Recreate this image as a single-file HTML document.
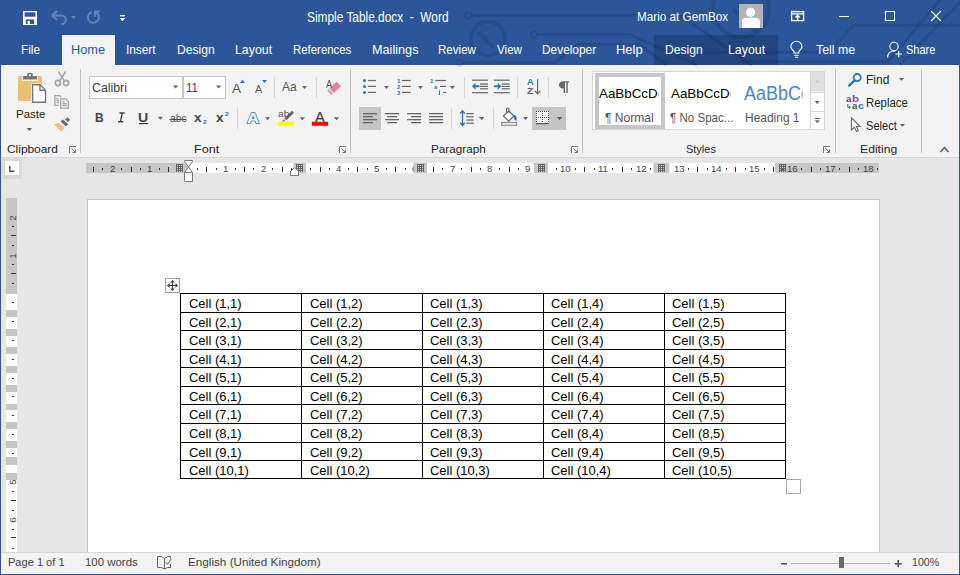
<!DOCTYPE html>
<html><head><meta charset="utf-8"><style>
html,body{margin:0;padding:0}
body{width:960px;height:575px;overflow:hidden;position:relative;background:#e6e6e6;font-family:"Liberation Sans", sans-serif}
body>div{position:absolute}
.t{position:absolute;white-space:nowrap;transform-origin:0 0}
svg{position:absolute;left:0;top:0}
</style></head><body>
<div style="left:0px;top:0px;width:960px;height:65px;background:#2b579a"></div>
<div style="left:0px;top:65px;width:960px;height:92px;background:#f3f3f3"></div>
<div style="left:0px;top:157px;width:960px;height:1px;background:#d6d6d6"></div>
<div style="left:0px;top:158px;width:960px;height:394px;background:#e6e6e6"></div>
<div style="left:0px;top:552px;width:960px;height:1px;background:#d6d6d6"></div>
<div style="left:0px;top:553px;width:960px;height:22px;background:#f3f3f3"></div>
<div style="left:0px;top:65px;width:1px;height:510px;background:#2b579a"></div>
<div style="left:959px;top:65px;width:1px;height:510px;background:#2b579a"></div>
<div style="left:0px;top:574px;width:960px;height:1px;background:#2b579a"></div>
<div style="left:62px;top:35px;width:53px;height:30px;background:#f3f3f3"></div>
<div style="left:654px;top:35px;width:124px;height:30px;background:rgba(10,25,60,0.27)"></div>
<div style="left:89px;top:76px;width:94px;height:23px;background:#fff;border:1px solid #c6c6c6;box-sizing:border-box"></div>
<div style="left:183px;top:76px;width:43px;height:23px;background:#fff;border:1px solid #c6c6c6;box-sizing:border-box"></div>
<div style="left:592px;top:71px;width:233px;height:59px;background:#fff;border:1px solid #d6d6d6;box-sizing:border-box"></div>
<div style="left:0;top:0;width:960px;height:575px;overflow:hidden;clip-path:polygon(597px 80px,658.5px 80px,658.5px 105px,597px 105px)"><div class="t" style="left:599.47px;top:86.93px;font-size:13.2px;line-height:13.2px;color:#000;transform:scaleX(1.0132);">AaBbCcDc</div></div>
<div style="left:0;top:0;width:960px;height:575px;overflow:hidden;clip-path:polygon(668px 80px,730.5px 80px,730.5px 105px,668px 105px)"><div class="t" style="left:670.97px;top:86.93px;font-size:13.2px;line-height:13.2px;color:#000;transform:scaleX(1.0132);">AaBbCcDc</div></div>
<div style="left:0;top:0;width:960px;height:575px;overflow:hidden;clip-path:polygon(740px 78px,802.5px 78px,802.5px 106px,740px 106px)"><div class="t" style="left:743.71px;top:83.99px;font-size:19.5px;line-height:19.5px;color:#4f84cc;transform:scaleX(0.9203);">AaBbCcc</div></div>
<div style="left:2px;top:157.5px;width:20px;height:21px;background:#dadada"></div>
<div style="left:5px;top:161px;width:14px;height:14px;background:#fff"></div>
<div style="left:87px;top:199px;width:793px;height:353px;background:#fff;border:1px solid #c6c6c6;border-bottom:none;box-sizing:border-box"></div>
<svg width="960" height="575" viewBox="0 0 960 575">
<g fill="none" stroke="rgba(12,30,70,0.17)" stroke-width="3" stroke-linejoin="round"><circle cx="468.4" cy="15.3" r="3.2" stroke-width="2.2"/><path d="M471.6 15.3 H680 L752 65"/><circle cx="534" cy="34.6" r="3.2" stroke-width="2.2"/><path d="M537.2 34.6 H630.4 L697 65"/><circle cx="459.5" cy="62.5" r="3" stroke-width="2.2"/><path d="M462.5 62.5 H555 L577 44.5 H640 L666 65"/><path d="M700 52.3 H828.75 L853.75 25.2 H960"/><path d="M740 61.7 H888 L940 0"/><path d="M962 0 L900 65"/><circle cx="488" cy="38.8" r="17" stroke-width="3.5"/><path d="M478 32 L493 47" stroke-width="4"/><path d="M476 30 H486 L476 40z" fill="{CC}" stroke="none"/><circle cx="741" cy="9" r="28" stroke-width="4"/><path d="M733 9 L756 32" stroke-width="4"/><path d="M728 4 H742 L728 18z" fill="{CC}" stroke="none"/></g>
<rect x="23" y="11" width="14" height="14" fill="#fff" />
<rect x="24.6" y="12.3" width="10.8" height="4.4" fill="#2b579a" />
<rect x="25.8" y="19.4" width="8.4" height="4.6" fill="#2b579a" />
<rect x="27.6" y="21" width="2.3" height="3.5" fill="#fff" />
<path d="M53 15.5 H61.5 A4.2 4.2 0 0 1 61.5 24" fill="none" stroke="#6485bb" stroke-width="2"/>
<path d="M52 15.5 L57 11 M52 15.5 L57 20" fill="none" stroke="#6485bb" stroke-width="2"/>
<path d="M71 16 h5 l-2.5 3z" fill="#6485bb"/>
<path d="M91.5 12.2 A5.5 5.5 0 1 0 96 12.5" fill="none" stroke="#6485bb" stroke-width="2"/>
<path d="M95 11.5 h5 M95 11 v6" fill="none" stroke="#6485bb" stroke-width="2"/>
<rect x="120" y="15" width="5" height="1.3" fill="#fff" />
<path d="M119.7 18 h5.6 l-2.8 3.3z" fill="#fff"/>
<rect x="739" y="4" width="24" height="24" fill="#b3b3b3" />
<circle cx="750.6" cy="12.3" r="4.6" fill="#fff"/>
<path d="M742 28 V22 Q742 18 746 17.8 H755.5 Q760 18 760 22 V28z" fill="#fff"/>
<g fill="none" stroke="#fff" stroke-width="1.3"><rect x="791.6" y="11.6" width="12" height="9"/><path d="M791.6 13.8 H803.6 M797.6 21 V15.5 M795.5 17.5 L797.6 15.3 L799.7 17.5"/></g>
<rect x="839" y="16" width="10" height="1" fill="#fff" />
<rect x="885.5" y="11.5" width="9" height="9" fill="none" stroke="#fff" stroke-width="1"/>
<path d="M931 11 L941 21 M941 11 L931 21" stroke="#fff" stroke-width="1.1"/>
<g fill="none" stroke="#fff" stroke-width="1.1"><path d="M794 53 V51.5 Q790.8 48.5 790.8 46.8 A5.6 5.6 0 1 1 802 46.8 Q802 48.5 798.8 51.5 V53z"/><path d="M794.3 55.3 H798.5 M795 57.3 H798"/></g>
<g fill="none" stroke="#fff" stroke-width="1.1"><circle cx="894" cy="46.5" r="4.2"/><path d="M887.5 57.5 Q888 51.5 893 51 H895.5"/><path d="M898.7 50.7 V57.3 M895.4 54 H902"/></g>
<rect x="80" y="69" width="1" height="84" fill="#c2c2c2" />
<rect x="350" y="69" width="1" height="84" fill="#c2c2c2" />
<rect x="582" y="69" width="1" height="84" fill="#c2c2c2" />
<rect x="835" y="69" width="1" height="84" fill="#c2c2c2" />
<rect x="921" y="69" width="1" height="84" fill="#c2c2c2" />
<rect x="274" y="77" width="1" height="21" fill="#d6d6d6" />
<rect x="316" y="77" width="1" height="21" fill="#d6d6d6" />
<rect x="237" y="108" width="1" height="21" fill="#d6d6d6" />
<rect x="464" y="77" width="1" height="21" fill="#d6d6d6" />
<rect x="517" y="77" width="1" height="21" fill="#d6d6d6" />
<rect x="548" y="77" width="1" height="21" fill="#d6d6d6" />
<rect x="451" y="108" width="1" height="21" fill="#d6d6d6" />
<rect x="493" y="108" width="1" height="21" fill="#d6d6d6" />
<g fill="none" stroke="#777" stroke-width="1"><path d="M69.5 153 V146.5 H76"/><path d="M71.5 148.5 L75.5 152.5 M75.5 149.5 V152.5 H72.5"/></g>
<g fill="none" stroke="#777" stroke-width="1"><path d="M339.5 153 V146.5 H346"/><path d="M341.5 148.5 L345.5 152.5 M345.5 149.5 V152.5 H342.5"/></g>
<g fill="none" stroke="#777" stroke-width="1"><path d="M571.5 153 V146.5 H578"/><path d="M573.5 148.5 L577.5 152.5 M577.5 149.5 V152.5 H574.5"/></g>
<g fill="none" stroke="#777" stroke-width="1"><path d="M823.5 153 V146.5 H830"/><path d="M825.5 148.5 L829.5 152.5 M829.5 149.5 V152.5 H826.5"/></g>
<rect x="18" y="76" width="24" height="25" rx="1.5" fill="#ebc173"/>
<rect x="22" y="75" width="16" height="6" fill="#f3f3f3" />
<path d="M23 76 H27.2 V74 Q27.2 73 28.2 73 H31.8 Q32.8 73 32.8 74 V76 H37 V79.5 H23z" fill="#767676"/>
<circle cx="30" cy="75.3" r="1" fill="#fff"/>
<path d="M31 83.5 H40.6 L46.8 89.7 V103.3 H31z" fill="#f3f3f3"/>
<path d="M32.6 84.8 H40 L45.5 90.3 V102.2 H32.6z" fill="#fff" stroke="#767676" stroke-width="1.4"/>
<path d="M40 84.8 V90.3 H45.5" fill="none" stroke="#767676" stroke-width="1.4"/>
<path d="M26.5 128 h5.6 l-2.8 3z" fill="#666"/>
<g fill="none" stroke="#a6a6a6" stroke-width="1.6"><path d="M58.3 71.5 L64.2 80.5 M65.7 71.5 L59.8 80.5"/><circle cx="57.9" cy="83" r="2.6"/><circle cx="66.1" cy="83" r="2.6"/></g>
<g fill="none" stroke="#a6a6a6" stroke-width="1.3"><path d="M59 105.3 H54.9 V95.7 H59.8 L61.2 97.1"/><path d="M60.7 108.2 V98.8 H65.6 L68.4 101.6 V108.2z"/><path d="M56.5 98.5 h2 M56.5 100.5 h2.5 M56.5 102.5 h2.5 M62.5 101.5 h2 M62.5 103.5 h4.3 M62.5 105.5 h4.3"/></g>
<path d="M54 124.3 L58.6 122.9 L64.8 127.9 L61 131.6z" fill="#ebc173"/>
<path d="M60.6 121.5 L62.8 119.6 L68.3 124.3 L66 126.4z" fill="#6d6d6d"/>
<path d="M65 119.5 L67.5 117.3 L70.2 119.8 L67.7 122z" fill="#6d6d6d"/>
<path d="M172.8 85.6 h5.6 l-2.8 3z M216 85.6 h5.4 l-2.7 3z" fill="#666"/>
<path d="M239.9 83 L242.45 79.8 L245 83z M262 80 h5 l-2.5 3z" fill="#2e75b6"/>
<path d="M302 86 h5 l-2.5 3z" fill="#666"/>
<g transform="rotate(-42 334 88.3)"><rect x="327.5" y="85.2" width="13" height="6.4" rx="1" fill="#e58296"/><rect x="329.3" y="84" width="1.3" height="9" fill="#f3f3f3"/></g>
<path d="M119.5 113 H124.7 M118 121.8 H123.2 M122.3 113 L120.3 121.8" stroke="#444" stroke-width="1.4" fill="none"/>
<rect x="139" y="123" width="9" height="1.2" fill="#444" />
<path d="M157.8 116.8 h5.2 l-2.6 3z" fill="#666"/>
<rect x="169.5" y="119" width="17" height="1" fill="#444" />
<path d="M265 117.2 h5 l-2.5 3z M299.9 117.2 h5.1 l-2.55 3z M333.7 117.2 h5.5 l-2.75 3z" fill="#666"/>
<path d="M285 119.3 L292.8 111.8" stroke="#f3f3f3" stroke-width="5"/><path d="M285.3 119.3 L293 111.8" stroke="#666" stroke-width="3"/><path d="M282.5 121.8 L284.8 119.8" stroke="#777" stroke-width="1.5"/>
<rect x="277.9" y="121.8" width="16.2" height="4" fill="#ffff00" />
<rect x="311.9" y="121.8" width="16.3" height="4" fill="#ff0000" />
<circle cx="364.5" cy="80.5" r="1.5" fill="#2e75b6"/>
<rect x="368" y="79.9" width="8" height="1.2" fill="#666" />
<rect x="402" y="79.9" width="8.7" height="1.2" fill="#666" />
<circle cx="364.5" cy="86.4" r="1.5" fill="#2e75b6"/>
<rect x="368" y="85.80000000000001" width="8" height="1.2" fill="#666" />
<rect x="402" y="85.80000000000001" width="8.7" height="1.2" fill="#666" />
<circle cx="364.5" cy="92.4" r="1.5" fill="#2e75b6"/>
<rect x="368" y="91.80000000000001" width="8" height="1.2" fill="#666" />
<rect x="402" y="91.80000000000001" width="8.7" height="1.2" fill="#666" />
<path d="M384 85.9 h5 l-2.5 3z M418 85.9 h5 l-2.5 3z M449.7 85.9 h5.3 l-2.65 3z" fill="#666"/>
<rect x="438.9" y="91" width="1.1" height="4" fill="#2e75b6" />
<rect x="438.9" y="89.6" width="1.1" height="0.8" fill="#2e75b6" />
<rect x="435.3" y="79.9" width="10.7" height="1.2" fill="#666" />
<rect x="440" y="85.8" width="6" height="1.2" fill="#666" />
<rect x="443.2" y="91.8" width="2.8" height="1.2" fill="#666" />
<rect x="472" y="79.6" width="16" height="1.2" fill="#666" />
<rect x="472" y="92.1" width="16" height="1.2" fill="#666" />
<rect x="480" y="83.4" width="8" height="1.2" fill="#666" />
<rect x="480" y="85.8" width="8" height="1.2" fill="#666" />
<rect x="480" y="88.2" width="8" height="1.2" fill="#666" />
<rect x="493.75" y="79.6" width="16" height="1.2" fill="#666" />
<rect x="493.75" y="92.1" width="16" height="1.2" fill="#666" />
<rect x="501.75" y="83.4" width="8" height="1.2" fill="#666" />
<rect x="501.75" y="85.8" width="8" height="1.2" fill="#666" />
<rect x="501.75" y="88.2" width="8" height="1.2" fill="#666" />
<path d="M472 86.3 L475.5 82.8 V85.3 H479.4 V87.3 H475.5 V89.8z" fill="#2e75b6"/>
<path d="M501.3 86.3 L497.8 82.8 V85.3 H493.9 V87.3 H497.8 V89.8z" fill="#2e75b6"/>
<path d="M537.6 79.3 V93.5 M535 90.8 L537.6 93.8 L540.2 90.8" stroke="#666" stroke-width="1.2" fill="none"/>
<path d="M563.6 81.2 H569 V82.6 H567.8 V93 H566.4 V82.6 H565 V93 H563.6 V88.4 Q559 88.4 559 84.8 Q559 81.2 563.6 81.2z" fill="#666"/>
<rect x="359" y="107" width="22" height="23" fill="#c5c5c5" />
<rect x="363" y="113" width="14" height="1.3" fill="#666" />
<rect x="363" y="116" width="10" height="1.3" fill="#666" />
<rect x="363" y="119" width="14" height="1.3" fill="#666" />
<rect x="363" y="122" width="10" height="1.3" fill="#666" />
<rect x="385" y="113" width="14" height="1.3" fill="#666" />
<rect x="387.2" y="116" width="9.8" height="1.3" fill="#666" />
<rect x="385" y="119" width="14" height="1.3" fill="#666" />
<rect x="387.2" y="122" width="9.8" height="1.3" fill="#666" />
<rect x="407.1" y="113" width="14" height="1.3" fill="#666" />
<rect x="411.1" y="116" width="10" height="1.3" fill="#666" />
<rect x="407.1" y="119" width="14" height="1.3" fill="#666" />
<rect x="411.1" y="122" width="10" height="1.3" fill="#666" />
<rect x="429.1" y="113" width="14" height="1.3" fill="#666" />
<rect x="429.1" y="116" width="14" height="1.3" fill="#666" />
<rect x="429.1" y="119" width="14" height="1.3" fill="#666" />
<rect x="429.1" y="122" width="14" height="1.3" fill="#666" />
<path d="M462.5 111 V125 M460.2 113.5 L462.5 110.8 L464.8 113.5 M460.2 122.7 L462.5 125.4 L464.8 122.7" stroke="#2e75b6" stroke-width="1.4" fill="none"/>
<rect x="466.25" y="113" width="7.5" height="1.2" fill="#666" />
<rect x="466.25" y="116.2" width="7.5" height="1.2" fill="#666" />
<rect x="466.25" y="119.4" width="7.5" height="1.2" fill="#666" />
<rect x="466.25" y="122.6" width="7.5" height="1.2" fill="#666" />
<path d="M478.75 117.1 h5.6 l-2.8 3z M523 117.1 h5.1 l-2.55 3z" fill="#666"/>
<path d="M503.5 116 L508.7 110.8 L513.9 116 L508.7 121.2z" fill="#fff" stroke="#666" stroke-width="1.2"/>
<path d="M506.5 113 V109.3 Q506.5 108 507.8 108 Q509 108 509 109.3 V113" fill="none" stroke="#666" stroke-width="1.1"/>
<path d="M513.5 114.5 Q517.5 116 516.5 120.5 Q515 121 514.3 119.5z" fill="#2e75b6"/>
<rect x="501.8" y="122.6" width="14.6" height="2.6" fill="#fff" stroke="#777" stroke-width="1"/>
<rect x="532" y="107" width="34" height="23" fill="#c5c5c5" />
<rect x="536" y="111" width="13" height="12" fill="#fff"/><path d="M536.5 111 V123 M542.5 111 V123 M548.5 111 V123 M536 111.5 H549 M536 117.5 H549" stroke="#444" stroke-width="1" stroke-dasharray="1 1"/>
<rect x="536" y="123" width="13" height="1.2" fill="#555" />
<path d="M556.9 117.1 h5.35 l-2.7 3z" fill="#555"/>
<rect x="597" y="75" width="66" height="52" fill="none" stroke="#c6c6c6" stroke-width="4"/>
<rect x="810" y="71" width="1" height="59" fill="#d6d6d6" />
<rect x="811" y="72" width="13" height="19.5" fill="#e0e0e0" />
<rect x="811" y="92" width="13" height="1" fill="#d6d6d6" />
<rect x="811" y="111" width="13" height="1" fill="#d6d6d6" />
<path d="M814.8 82.5 h5 l-2.5 -2.8z" fill="#c8c8c8"/>
<path d="M814.8 101 h5 l-2.5 3z" fill="#666"/>
<rect x="814.6" y="118" width="5.8" height="1" fill="#666" />
<path d="M814.8 120.3 h5 l-2.5 3z" fill="#666"/>
<circle cx="857.2" cy="77.6" r="3.6" fill="none" stroke="#2e75b6" stroke-width="1.8"/>
<path d="M854.6 80.3 L849.2 85.6" stroke="#2e75b6" stroke-width="2.4" stroke-linecap="round"/>
<path d="M898.7 78 h5.5 l-2.75 2.8z M900 124 h5 l-2.5 2.8z" fill="#666"/>
<path d="M847.8 104 V107.3 H850.5 M849 106 L850.6 107.3 L849 108.6" fill="none" stroke="#2e75b6" stroke-width="1"/>
<path d="M851.5 117.8 V129.8 L854.3 127.3 L856.6 131.5 L858.3 130.6 L856.3 126.6 L860 126.3z" fill="#fff" stroke="#666" stroke-width="1.1"/>
<path d="M940.5 152 L944.5 147.5 L948.5 152" fill="none" stroke="#666" stroke-width="1.8"/>
<rect x="9" y="166" width="1.5" height="6" fill="#555" />
<rect x="9" y="170.5" width="5.5" height="1.5" fill="#555" />
<rect x="86" y="163" width="793" height="10" fill="#c6c6c6" />
<rect x="188" y="163" width="105.75" height="10" fill="#fff" />
<rect x="306" y="163" width="107.69999999999999" height="10" fill="#fff" />
<rect x="427" y="163" width="107.20000000000005" height="10" fill="#fff" />
<rect x="548" y="163" width="105.70000000000005" height="10" fill="#fff" />
<rect x="669.2" y="163" width="105.79999999999995" height="10" fill="#fff" />
<rect x="93" y="167" width="1" height="5" fill="#333" />
<rect x="102" y="168" width="1" height="2" fill="#333" />
<rect x="121" y="168" width="1" height="2" fill="#333" />
<rect x="131" y="167" width="1" height="5" fill="#333" />
<rect x="140" y="168" width="1" height="2" fill="#333" />
<rect x="159" y="168" width="1" height="2" fill="#333" />
<rect x="168" y="167" width="1" height="5" fill="#333" />
<rect x="178" y="168" width="1" height="2" fill="#333" />
<rect x="197" y="168" width="1" height="2" fill="#333" />
<rect x="206" y="167" width="1" height="5" fill="#333" />
<rect x="216" y="168" width="1" height="2" fill="#333" />
<rect x="235" y="168" width="1" height="2" fill="#333" />
<rect x="244" y="167" width="1" height="5" fill="#333" />
<rect x="253" y="168" width="1" height="2" fill="#333" />
<rect x="272" y="168" width="1" height="2" fill="#333" />
<rect x="282" y="167" width="1" height="5" fill="#333" />
<rect x="291" y="168" width="1" height="2" fill="#333" />
<rect x="310" y="168" width="1" height="2" fill="#333" />
<rect x="320" y="167" width="1" height="5" fill="#333" />
<rect x="329" y="168" width="1" height="2" fill="#333" />
<rect x="348" y="168" width="1" height="2" fill="#333" />
<rect x="357" y="167" width="1" height="5" fill="#333" />
<rect x="367" y="168" width="1" height="2" fill="#333" />
<rect x="386" y="168" width="1" height="2" fill="#333" />
<rect x="395" y="167" width="1" height="5" fill="#333" />
<rect x="405" y="168" width="1" height="2" fill="#333" />
<rect x="433" y="167" width="1" height="5" fill="#333" />
<rect x="442" y="168" width="1" height="2" fill="#333" />
<rect x="461" y="168" width="1" height="2" fill="#333" />
<rect x="471" y="167" width="1" height="5" fill="#333" />
<rect x="480" y="168" width="1" height="2" fill="#333" />
<rect x="499" y="168" width="1" height="2" fill="#333" />
<rect x="509" y="167" width="1" height="5" fill="#333" />
<rect x="518" y="168" width="1" height="2" fill="#333" />
<rect x="556" y="168" width="1" height="2" fill="#333" />
<rect x="575" y="168" width="1" height="2" fill="#333" />
<rect x="584" y="167" width="1" height="5" fill="#333" />
<rect x="594" y="168" width="1" height="2" fill="#333" />
<rect x="612" y="168" width="1" height="2" fill="#333" />
<rect x="622" y="167" width="1" height="5" fill="#333" />
<rect x="631" y="168" width="1" height="2" fill="#333" />
<rect x="650" y="168" width="1" height="2" fill="#333" />
<rect x="688" y="168" width="1" height="2" fill="#333" />
<rect x="697" y="167" width="1" height="5" fill="#333" />
<rect x="707" y="168" width="1" height="2" fill="#333" />
<rect x="726" y="168" width="1" height="2" fill="#333" />
<rect x="735" y="167" width="1" height="5" fill="#333" />
<rect x="745" y="168" width="1" height="2" fill="#333" />
<rect x="764" y="168" width="1" height="2" fill="#333" />
<rect x="773" y="167" width="1" height="5" fill="#333" />
<rect x="782" y="168" width="1" height="2" fill="#333" />
<rect x="801" y="168" width="1" height="2" fill="#333" />
<rect x="811" y="167" width="1" height="5" fill="#333" />
<rect x="820" y="168" width="1" height="2" fill="#333" />
<rect x="839" y="168" width="1" height="2" fill="#333" />
<rect x="849" y="167" width="1" height="5" fill="#333" />
<rect x="858" y="168" width="1" height="2" fill="#333" />
<rect x="877" y="168" width="1" height="2" fill="#333" />
<rect x="6" y="198" width="11" height="354" fill="#fff" />
<rect x="6" y="198" width="11" height="96" fill="#c6c6c6" />
<rect x="6" y="310" width="11" height="7" fill="#c6c6c6" />
<rect x="6" y="329" width="11" height="7" fill="#c6c6c6" />
<rect x="6" y="347" width="11" height="7" fill="#c6c6c6" />
<rect x="6" y="366" width="11" height="7" fill="#c6c6c6" />
<rect x="6" y="385" width="11" height="7" fill="#c6c6c6" />
<rect x="6" y="404" width="11" height="6" fill="#c6c6c6" />
<rect x="6" y="422" width="11" height="7" fill="#c6c6c6" />
<rect x="6" y="441" width="11" height="7" fill="#c6c6c6" />
<rect x="6" y="457" width="11" height="8" fill="#c6c6c6" />
<rect x="6" y="473" width="11" height="7" fill="#c6c6c6" />
<rect x="12" y="226" width="2" height="1" fill="#333" />
<rect x="11" y="235" width="5" height="1" fill="#333" />
<rect x="12" y="245" width="2" height="1" fill="#333" />
<rect x="12" y="264" width="2" height="1" fill="#333" />
<rect x="11" y="273" width="5" height="1" fill="#333" />
<rect x="12" y="283" width="2" height="1" fill="#333" />
<rect x="12" y="302" width="2" height="1" fill="#333" />
<rect x="12" y="321" width="2" height="1" fill="#333" />
<rect x="12" y="340" width="2" height="1" fill="#333" />
<rect x="12" y="359" width="2" height="1" fill="#333" />
<rect x="12" y="378" width="2" height="1" fill="#333" />
<rect x="12" y="396" width="2" height="1" fill="#333" />
<rect x="12" y="415" width="2" height="1" fill="#333" />
<rect x="12" y="434" width="2" height="1" fill="#333" />
<rect x="12" y="453" width="2" height="1" fill="#333" />
<rect x="12" y="491" width="2" height="1" fill="#333" />
<rect x="11" y="500" width="5" height="1" fill="#333" />
<rect x="12" y="510" width="2" height="1" fill="#333" />
<rect x="12" y="529" width="2" height="1" fill="#333" />
<rect x="11" y="537" width="5" height="1" fill="#333" />
<rect x="12" y="548" width="2" height="1" fill="#333" />
<rect x="781" y="563" width="6" height="1.6" fill="#555" />
<rect x="791" y="563" width="99" height="1" fill="#b5b5b5" />
<rect x="839" y="557" width="5" height="11" fill="#6a6a6a" />
<rect x="894.7" y="563" width="7" height="1.6" fill="#555" />
<rect x="897.4" y="560" width="1.6" height="7.2" fill="#555" />
<g fill="none" stroke="#666" stroke-width="1"><path d="M157.5 556.5 H161.5 L164.5 558.5 V569 L161.5 567.5 H157.5z"/><path d="M164.5 558.5 L167.5 556.5 H170.5 V558.5 M170.5 564 V567.5 H167.5 L164.5 569"/><path d="M165.8 562.3 L167.6 564.3 L171.3 558.8"/></g>
</svg>
<div class="t" style="left:109.56px;top:164.20px;font-size:9.8px;line-height:9.8px;color:#444;transform:scaleX(0.9796);">2</div>
<div class="t" style="left:147.21px;top:164.20px;font-size:9.8px;line-height:9.8px;color:#444;transform:scaleX(0.9796);">1</div>
<div class="t" style="left:222.79px;top:164.20px;font-size:9.8px;line-height:9.8px;color:#444;transform:scaleX(0.9796);">1</div>
<div class="t" style="left:260.72px;top:164.20px;font-size:9.8px;line-height:9.8px;color:#444;transform:scaleX(0.9796);">2</div>
<div class="t" style="left:298.53px;top:164.20px;font-size:9.8px;line-height:9.8px;color:#444;transform:scaleX(0.9796);">3</div>
<div class="t" style="left:336.32px;top:164.20px;font-size:9.8px;line-height:9.8px;color:#444;transform:scaleX(0.9796);">4</div>
<div class="t" style="left:374.09px;top:164.20px;font-size:9.8px;line-height:9.8px;color:#444;transform:scaleX(0.9796);">5</div>
<div class="t" style="left:411.84px;top:164.20px;font-size:9.8px;line-height:9.8px;color:#444;transform:scaleX(0.9796);">6</div>
<div class="t" style="left:449.67px;top:164.20px;font-size:9.8px;line-height:9.8px;color:#444;transform:scaleX(0.9796);">7</div>
<div class="t" style="left:487.46px;top:164.20px;font-size:9.8px;line-height:9.8px;color:#444;transform:scaleX(0.9796);">8</div>
<div class="t" style="left:525.23px;top:164.20px;font-size:9.8px;line-height:9.8px;color:#444;transform:scaleX(0.9796);">9</div>
<div class="t" style="left:560.19px;top:164.20px;font-size:9.8px;line-height:9.8px;color:#444;transform:scaleX(0.9796);">10</div>
<div class="t" style="left:598.38px;top:164.20px;font-size:9.8px;line-height:9.8px;color:#444;transform:scaleX(0.9796);">11</div>
<div class="t" style="left:635.83px;top:164.20px;font-size:9.8px;line-height:9.8px;color:#444;transform:scaleX(0.9796);">12</div>
<div class="t" style="left:673.59px;top:164.20px;font-size:9.8px;line-height:9.8px;color:#444;transform:scaleX(0.9796);">13</div>
<div class="t" style="left:711.30px;top:164.20px;font-size:9.8px;line-height:9.8px;color:#444;transform:scaleX(0.9796);">14</div>
<div class="t" style="left:749.15px;top:164.20px;font-size:9.8px;line-height:9.8px;color:#444;transform:scaleX(0.9796);">15</div>
<div class="t" style="left:786.96px;top:164.20px;font-size:9.8px;line-height:9.8px;color:#444;transform:scaleX(0.9796);">16</div>
<div class="t" style="left:824.78px;top:164.20px;font-size:9.8px;line-height:9.8px;color:#444;transform:scaleX(0.9796);">17</div>
<div class="t" style="left:862.54px;top:164.20px;font-size:9.8px;line-height:9.8px;color:#444;transform:scaleX(0.9796);">18</div>
<div class="t" style="left:3.3000000000000007px;top:212.72000000000003px;width:20px;height:10px;line-height:10px;text-align:center;font-size:9.6px;color:#444;transform:rotate(-90deg);transform-origin:50% 50%">2</div>
<div class="t" style="left:3.3000000000000007px;top:250.51000000000002px;width:20px;height:10px;line-height:10px;text-align:center;font-size:9.6px;color:#444;transform:rotate(-90deg);transform-origin:50% 50%">1</div>
<div class="t" style="left:3.3000000000000007px;top:477.25px;width:20px;height:10px;line-height:10px;text-align:center;font-size:9.6px;color:#444;transform:rotate(-90deg);transform-origin:50% 50%">5</div>
<div class="t" style="left:3.3000000000000007px;top:515.04px;width:20px;height:10px;line-height:10px;text-align:center;font-size:9.6px;color:#444;transform:rotate(-90deg);transform-origin:50% 50%">6</div>
<svg width="960" height="575" viewBox="0 0 960 575" style="position:absolute;left:0;top:0"><rect x="293.75" y="163" width="12.25" height="10" fill="#c6c6c6"/><rect x="296" y="164" width="1" height="8" fill="#666"/><rect x="296" y="164" width="7" height="1" fill="#666"/><rect x="298" y="164" width="1" height="8" fill="#666"/><rect x="296" y="166" width="7" height="1" fill="#666"/><rect x="300" y="164" width="1" height="8" fill="#666"/><rect x="296" y="168" width="7" height="1" fill="#666"/><rect x="302" y="164" width="1" height="8" fill="#666"/><rect x="296" y="170" width="7" height="1" fill="#666"/><rect x="413.7" y="163" width="13.300000000000011" height="10" fill="#c6c6c6"/><rect x="417" y="164" width="1" height="8" fill="#666"/><rect x="417" y="164" width="7" height="1" fill="#666"/><rect x="419" y="164" width="1" height="8" fill="#666"/><rect x="417" y="166" width="7" height="1" fill="#666"/><rect x="421" y="164" width="1" height="8" fill="#666"/><rect x="417" y="168" width="7" height="1" fill="#666"/><rect x="423" y="164" width="1" height="8" fill="#666"/><rect x="417" y="170" width="7" height="1" fill="#666"/><rect x="534.2" y="163" width="13.799999999999955" height="10" fill="#c6c6c6"/><rect x="538" y="164" width="1" height="8" fill="#666"/><rect x="538" y="164" width="7" height="1" fill="#666"/><rect x="540" y="164" width="1" height="8" fill="#666"/><rect x="538" y="166" width="7" height="1" fill="#666"/><rect x="542" y="164" width="1" height="8" fill="#666"/><rect x="538" y="168" width="7" height="1" fill="#666"/><rect x="544" y="164" width="1" height="8" fill="#666"/><rect x="538" y="170" width="7" height="1" fill="#666"/><rect x="653.7" y="163" width="15.5" height="10" fill="#c6c6c6"/><rect x="658" y="164" width="1" height="8" fill="#666"/><rect x="658" y="164" width="7" height="1" fill="#666"/><rect x="660" y="164" width="1" height="8" fill="#666"/><rect x="658" y="166" width="7" height="1" fill="#666"/><rect x="662" y="164" width="1" height="8" fill="#666"/><rect x="658" y="168" width="7" height="1" fill="#666"/><rect x="664" y="164" width="1" height="8" fill="#666"/><rect x="658" y="170" width="7" height="1" fill="#666"/><rect x="775" y="163" width="4.5" height="10" fill="#c6c6c6"/><rect x="176" y="164" width="1" height="8" fill="#666"/><rect x="176" y="164" width="7" height="1" fill="#666"/><rect x="178" y="164" width="1" height="8" fill="#666"/><rect x="176" y="166" width="7" height="1" fill="#666"/><rect x="180" y="164" width="1" height="8" fill="#666"/><rect x="176" y="168" width="7" height="1" fill="#666"/><rect x="182" y="164" width="1" height="8" fill="#666"/><rect x="176" y="170" width="7" height="1" fill="#666"/><rect x="6" y="473" width="11" height="7" fill="#c6c6c6"/><rect x="779" y="164" width="1" height="8" fill="#666"/><rect x="779" y="164" width="7" height="1" fill="#666"/><rect x="781" y="164" width="1" height="8" fill="#666"/><rect x="779" y="166" width="7" height="1" fill="#666"/><rect x="783" y="164" width="1" height="8" fill="#666"/><rect x="779" y="168" width="7" height="1" fill="#666"/><rect x="785" y="164" width="1" height="8" fill="#666"/><rect x="779" y="170" width="7" height="1" fill="#666"/><path d="M184.5 160.5 H192.5 V161.5 L188.5 167 L192.5 172.5 V181.5 H184.5 V172.5 L188.5 167 L184.5 161.5z" fill="#fff" stroke="#777" stroke-width="1"/><path d="M184.5 172.5 H192.5" stroke="#777" stroke-width="1"/><path d="M290.5 175.5 V171.5 L294.5 167.5 L298.5 171.5 V175.5z" fill="#fff" stroke="#777" stroke-width="1"/><rect x="180" y="293" width="606" height="1" fill="#000"/><rect x="180" y="312" width="606" height="1" fill="#000"/><rect x="180" y="330" width="606" height="1" fill="#000"/><rect x="180" y="349" width="606" height="1" fill="#000"/><rect x="180" y="367" width="606" height="1" fill="#000"/><rect x="180" y="386" width="606" height="1" fill="#000"/><rect x="180" y="404" width="606" height="1" fill="#000"/><rect x="180" y="423" width="606" height="1" fill="#000"/><rect x="180" y="442" width="606" height="1" fill="#000"/><rect x="180" y="460" width="606" height="1" fill="#000"/><rect x="180" y="478" width="606" height="1" fill="#000"/><rect x="180" y="293" width="1" height="186" fill="#000"/><rect x="301" y="293" width="1" height="186" fill="#000"/><rect x="422" y="293" width="1" height="186" fill="#000"/><rect x="543" y="293" width="1" height="186" fill="#000"/><rect x="664" y="293" width="1" height="186" fill="#000"/><rect x="785" y="293" width="1" height="186" fill="#000"/><rect x="165.5" y="278.5" width="14" height="14" fill="#fff" stroke="#a0a0a0" stroke-width="1"/><path d="M172.5 281 V290 M168 285.5 H177" stroke="#444" stroke-width="1" fill="none"/><path d="M172.5 279.8 L170.3 282.5 H174.7z M172.5 291.2 L170.3 288.5 H174.7z M166.8 285.5 L169.5 283.3 V287.7z M178.2 285.5 L175.5 283.3 V287.7z" fill="#444"/><rect x="786.5" y="479.5" width="14" height="14" fill="#fff" stroke="#a6a6a6" stroke-width="1"/></svg>
<div class="t" style="left:307.47px;top:10.82px;font-size:13.8px;line-height:13.8px;color:#fff;transform:scaleX(0.8612);white-space:pre">Simple Table.docx  -  Word</div>
<div class="t" style="left:636.93px;top:10.66px;font-size:12.8px;line-height:12.8px;color:#fff;transform:scaleX(0.9149);">Mario at GemBox</div>
<div class="t" style="left:20.73px;top:43.44px;font-size:13.3px;line-height:13.3px;color:#fff;transform:scaleX(0.8861);">File</div>
<div class="t" style="left:126.41px;top:43.44px;font-size:13.3px;line-height:13.3px;color:#fff;transform:scaleX(0.8866);">Insert</div>
<div class="t" style="left:177.00px;top:43.44px;font-size:13.3px;line-height:13.3px;color:#fff;transform:scaleX(0.9121);">Design</div>
<div class="t" style="left:234.98px;top:43.44px;font-size:13.3px;line-height:13.3px;color:#fff;transform:scaleX(0.9294);">Layout</div>
<div class="t" style="left:293.06px;top:43.44px;font-size:13.3px;line-height:13.3px;color:#fff;transform:scaleX(0.8576);">References</div>
<div class="t" style="left:371.95px;top:43.44px;font-size:13.3px;line-height:13.3px;color:#fff;transform:scaleX(0.9531);">Mailings</div>
<div class="t" style="left:438.05px;top:43.44px;font-size:13.3px;line-height:13.3px;color:#fff;transform:scaleX(0.8694);">Review</div>
<div class="t" style="left:496.94px;top:43.44px;font-size:13.3px;line-height:13.3px;color:#fff;transform:scaleX(0.8753);">View</div>
<div class="t" style="left:542.02px;top:43.44px;font-size:13.3px;line-height:13.3px;color:#fff;transform:scaleX(0.8935);">Developer</div>
<div class="t" style="left:615.93px;top:43.44px;font-size:13.3px;line-height:13.3px;color:#fff;transform:scaleX(0.9727);">Help</div>
<div class="t" style="left:665.00px;top:43.44px;font-size:13.3px;line-height:13.3px;color:#fff;transform:scaleX(0.9121);">Design</div>
<div class="t" style="left:727.98px;top:43.44px;font-size:13.3px;line-height:13.3px;color:#fff;transform:scaleX(0.9294);">Layout</div>
<div class="t" style="left:816.22px;top:43.44px;font-size:13.3px;line-height:13.3px;color:#fff;transform:scaleX(0.9282);">Tell me</div>
<div class="t" style="left:906.01px;top:43.44px;font-size:13.3px;line-height:13.3px;color:#fff;transform:scaleX(0.8247);">Share</div>
<div class="t" style="left:71.45px;top:43.44px;font-size:13.3px;line-height:13.3px;color:#2b579a;transform:scaleX(0.9611);">Home</div>
<div class="t" style="left:91.88px;top:81.56px;font-size:12.8px;line-height:12.8px;color:#3a3a50;transform:scaleX(0.9631);">Calibri</div>
<div class="t" style="left:186.06px;top:81.56px;font-size:12.8px;line-height:12.8px;color:#3a3a50;transform:scaleX(0.8794);">11</div>
<div class="t" style="left:232.37px;top:81.97px;font-size:13.5px;line-height:13.5px;color:#555;transform:scaleX(1.0063);">A</div>
<div class="t" style="left:255.27px;top:83.92px;font-size:11.2px;line-height:11.2px;color:#555;transform:scaleX(0.9704);">A</div>
<div class="t" style="left:282.27px;top:80.92px;font-size:12.5px;line-height:12.5px;color:#555;transform:scaleX(0.9620);">Aa</div>
<div class="t" style="left:325.78px;top:79.39px;font-size:11px;line-height:11px;color:#555;transform:scaleX(0.8508);">A</div>
<div class="t" style="left:95.09px;top:111.72px;font-size:12.5px;line-height:12.5px;color:#444;transform:scaleX(0.9574);font-weight:bold;">B</div>
<div class="t" style="left:138.40px;top:111.89px;font-size:12.3px;line-height:12.3px;color:#444;transform:scaleX(1.1537);font-weight:bold;">U</div>
<div class="t" style="left:169.56px;top:112.67px;font-size:11.5px;line-height:11.5px;color:#555;transform:scaleX(0.9020);">abc</div>
<div class="t" style="left:194.00px;top:111.56px;font-size:12.8px;line-height:12.8px;color:#444;transform:scaleX(1.0561);font-weight:bold;">x</div>
<div class="t" style="left:202.67px;top:119.32px;font-size:6px;line-height:6px;color:#2e75b6;transform:scaleX(1.1054);font-weight:bold;">2</div>
<div class="t" style="left:215.90px;top:111.56px;font-size:12.8px;line-height:12.8px;color:#444;transform:scaleX(1.0561);font-weight:bold;">x</div>
<div class="t" style="left:224.77px;top:111.32px;font-size:6px;line-height:6px;color:#2e75b6;transform:scaleX(1.1054);font-weight:bold;">2</div>
<div class="t" style="left:246.78px;top:110.18px;font-size:15.5px;line-height:15.5px;color:#fff;transform:scaleX(1.0785);font-weight:bold;-webkit-text-stroke:1.5px #2e75b6;paint-order:stroke fill">A</div>
<div class="t" style="left:277.57px;top:109.90px;font-size:8.5px;line-height:8.5px;color:#555;transform:scaleX(1.2022);">ab</div>
<div class="t" style="left:315.26px;top:110.62px;font-size:13.8px;line-height:13.8px;color:#444;transform:scaleX(1.0610);-webkit-text-stroke:0.25px #444">A</div>
<div class="t" style="left:396.61px;top:78.42px;font-size:6px;line-height:6px;color:#2e75b6;transform:scaleX(1.0394);font-weight:bold;">1</div>
<div class="t" style="left:396.79px;top:84.32px;font-size:6px;line-height:6px;color:#2e75b6;transform:scaleX(1.0017);font-weight:bold;">2</div>
<div class="t" style="left:396.87px;top:90.32px;font-size:6px;line-height:6px;color:#2e75b6;transform:scaleX(0.9715);font-weight:bold;">3</div>
<div class="t" style="left:429.82px;top:78.42px;font-size:6px;line-height:6px;color:#2e75b6;transform:scaleX(1.0036);font-weight:bold;">1</div>
<div class="t" style="left:433.83px;top:84.42px;font-size:6px;line-height:6px;color:#2e75b6;transform:scaleX(0.9390);font-weight:bold;">a</div>
<div class="t" style="left:526.67px;top:78.48px;font-size:9px;line-height:9px;color:#2e75b6;transform:scaleX(1.0282);font-weight:bold;">A</div>
<div class="t" style="left:526.90px;top:86.88px;font-size:9px;line-height:9px;color:#7b4fa6;transform:scaleX(1.1262);font-weight:bold;">Z</div>
<div class="t" style="left:604.52px;top:111.95px;font-size:12.7px;line-height:12.7px;color:#555;transform:scaleX(0.9517);">¶ Normal</div>
<div class="t" style="left:669.54px;top:111.95px;font-size:12.7px;line-height:12.7px;color:#555;transform:scaleX(0.9121);">¶ No Spac...</div>
<div class="t" style="left:745.01px;top:111.95px;font-size:12.7px;line-height:12.7px;color:#555;transform:scaleX(0.9426);">Heading 1</div>
<div class="t" style="left:846.21px;top:93.50px;font-size:9.8px;line-height:9.8px;color:#555;transform:scaleX(0.9773);font-weight:bold;">a</div>
<div class="t" style="left:852.05px;top:93.50px;font-size:9.8px;line-height:9.8px;color:#7b4fa6;transform:scaleX(1.1720);font-weight:bold;">b</div>
<div class="t" style="left:851.91px;top:100.80px;font-size:9.8px;line-height:9.8px;color:#555;transform:scaleX(0.9965);font-weight:bold;">a</div>
<div class="t" style="left:857.57px;top:100.80px;font-size:9.8px;line-height:9.8px;color:#2e75b6;transform:scaleX(1.0884);font-weight:bold;">c</div>
<div class="t" style="left:865.61px;top:74.00px;font-size:12.4px;line-height:12.4px;color:#262626;transform:scaleX(0.9677);">Find</div>
<div class="t" style="left:865.66px;top:96.80px;font-size:12.4px;line-height:12.4px;color:#262626;transform:scaleX(0.9197);">Replace</div>
<div class="t" style="left:865.80px;top:119.80px;font-size:12.4px;line-height:12.4px;color:#262626;transform:scaleX(0.8959);">Select</div>
<div class="t" style="left:15.76px;top:109.01px;font-size:11.8px;line-height:11.8px;color:#262626;transform:scaleX(0.9695);">Paste</div>
<div class="t" style="left:7.00px;top:143.18px;font-size:11.6px;line-height:11.6px;color:#262626;transform:scaleX(1.0260);">Clipboard</div>
<div class="t" style="left:193.96px;top:143.18px;font-size:11.6px;line-height:11.6px;color:#262626;transform:scaleX(1.0832);">Font</div>
<div class="t" style="left:431.03px;top:143.18px;font-size:11.6px;line-height:11.6px;color:#262626;transform:scaleX(1.0097);">Paragraph</div>
<div class="t" style="left:685.51px;top:143.18px;font-size:11.6px;line-height:11.6px;color:#262626;transform:scaleX(0.9461);">Styles</div>
<div class="t" style="left:859.79px;top:143.18px;font-size:11.6px;line-height:11.6px;color:#262626;transform:scaleX(1.0508);">Editing</div>
<div class="t" style="left:7.99px;top:557.19px;font-size:11px;line-height:11px;color:#444;transform:scaleX(1.0048);">Page 1 of 1</div>
<div class="t" style="left:85.14px;top:557.19px;font-size:11px;line-height:11px;color:#444;transform:scaleX(1.0392);">100 words</div>
<div class="t" style="left:188.03px;top:557.19px;font-size:11px;line-height:11px;color:#444;transform:scaleX(1.0638);">English (United Kingdom)</div>
<div class="t" style="left:912.20px;top:557.19px;font-size:11px;line-height:11px;color:#444;transform:scaleX(0.9657);">100%</div>
<div class="t" style="left:188.85px;top:297.62px;font-size:12.5px;line-height:12.5px;color:#000;transform:scaleX(1.0376);">Cell (1,1)</div>
<div class="t" style="left:309.55px;top:297.62px;font-size:12.5px;line-height:12.5px;color:#000;transform:scaleX(1.0376);">Cell (1,2)</div>
<div class="t" style="left:430.25px;top:297.62px;font-size:12.5px;line-height:12.5px;color:#000;transform:scaleX(1.0376);">Cell (1,3)</div>
<div class="t" style="left:550.95px;top:297.62px;font-size:12.5px;line-height:12.5px;color:#000;transform:scaleX(1.0376);">Cell (1,4)</div>
<div class="t" style="left:671.65px;top:297.62px;font-size:12.5px;line-height:12.5px;color:#000;transform:scaleX(1.0376);">Cell (1,5)</div>
<div class="t" style="left:188.85px;top:316.62px;font-size:12.5px;line-height:12.5px;color:#000;transform:scaleX(1.0376);">Cell (2,1)</div>
<div class="t" style="left:309.55px;top:316.62px;font-size:12.5px;line-height:12.5px;color:#000;transform:scaleX(1.0376);">Cell (2,2)</div>
<div class="t" style="left:430.25px;top:316.62px;font-size:12.5px;line-height:12.5px;color:#000;transform:scaleX(1.0376);">Cell (2,3)</div>
<div class="t" style="left:550.95px;top:316.62px;font-size:12.5px;line-height:12.5px;color:#000;transform:scaleX(1.0376);">Cell (2,4)</div>
<div class="t" style="left:671.65px;top:316.62px;font-size:12.5px;line-height:12.5px;color:#000;transform:scaleX(1.0376);">Cell (2,5)</div>
<div class="t" style="left:188.85px;top:334.62px;font-size:12.5px;line-height:12.5px;color:#000;transform:scaleX(1.0376);">Cell (3,1)</div>
<div class="t" style="left:309.55px;top:334.62px;font-size:12.5px;line-height:12.5px;color:#000;transform:scaleX(1.0376);">Cell (3,2)</div>
<div class="t" style="left:430.25px;top:334.62px;font-size:12.5px;line-height:12.5px;color:#000;transform:scaleX(1.0376);">Cell (3,3)</div>
<div class="t" style="left:550.95px;top:334.62px;font-size:12.5px;line-height:12.5px;color:#000;transform:scaleX(1.0376);">Cell (3,4)</div>
<div class="t" style="left:671.65px;top:334.62px;font-size:12.5px;line-height:12.5px;color:#000;transform:scaleX(1.0376);">Cell (3,5)</div>
<div class="t" style="left:188.85px;top:353.62px;font-size:12.5px;line-height:12.5px;color:#000;transform:scaleX(1.0376);">Cell (4,1)</div>
<div class="t" style="left:309.55px;top:353.62px;font-size:12.5px;line-height:12.5px;color:#000;transform:scaleX(1.0376);">Cell (4,2)</div>
<div class="t" style="left:430.25px;top:353.62px;font-size:12.5px;line-height:12.5px;color:#000;transform:scaleX(1.0376);">Cell (4,3)</div>
<div class="t" style="left:550.95px;top:353.62px;font-size:12.5px;line-height:12.5px;color:#000;transform:scaleX(1.0376);">Cell (4,4)</div>
<div class="t" style="left:671.65px;top:353.62px;font-size:12.5px;line-height:12.5px;color:#000;transform:scaleX(1.0376);">Cell (4,5)</div>
<div class="t" style="left:188.85px;top:371.62px;font-size:12.5px;line-height:12.5px;color:#000;transform:scaleX(1.0376);">Cell (5,1)</div>
<div class="t" style="left:309.55px;top:371.62px;font-size:12.5px;line-height:12.5px;color:#000;transform:scaleX(1.0376);">Cell (5,2)</div>
<div class="t" style="left:430.25px;top:371.62px;font-size:12.5px;line-height:12.5px;color:#000;transform:scaleX(1.0376);">Cell (5,3)</div>
<div class="t" style="left:550.95px;top:371.62px;font-size:12.5px;line-height:12.5px;color:#000;transform:scaleX(1.0376);">Cell (5,4)</div>
<div class="t" style="left:671.65px;top:371.62px;font-size:12.5px;line-height:12.5px;color:#000;transform:scaleX(1.0376);">Cell (5,5)</div>
<div class="t" style="left:188.85px;top:390.62px;font-size:12.5px;line-height:12.5px;color:#000;transform:scaleX(1.0376);">Cell (6,1)</div>
<div class="t" style="left:309.55px;top:390.62px;font-size:12.5px;line-height:12.5px;color:#000;transform:scaleX(1.0376);">Cell (6,2)</div>
<div class="t" style="left:430.25px;top:390.62px;font-size:12.5px;line-height:12.5px;color:#000;transform:scaleX(1.0376);">Cell (6,3)</div>
<div class="t" style="left:550.95px;top:390.62px;font-size:12.5px;line-height:12.5px;color:#000;transform:scaleX(1.0376);">Cell (6,4)</div>
<div class="t" style="left:671.65px;top:390.62px;font-size:12.5px;line-height:12.5px;color:#000;transform:scaleX(1.0376);">Cell (6,5)</div>
<div class="t" style="left:188.85px;top:408.62px;font-size:12.5px;line-height:12.5px;color:#000;transform:scaleX(1.0376);">Cell (7,1)</div>
<div class="t" style="left:309.55px;top:408.62px;font-size:12.5px;line-height:12.5px;color:#000;transform:scaleX(1.0376);">Cell (7,2)</div>
<div class="t" style="left:430.25px;top:408.62px;font-size:12.5px;line-height:12.5px;color:#000;transform:scaleX(1.0376);">Cell (7,3)</div>
<div class="t" style="left:550.95px;top:408.62px;font-size:12.5px;line-height:12.5px;color:#000;transform:scaleX(1.0376);">Cell (7,4)</div>
<div class="t" style="left:671.65px;top:408.62px;font-size:12.5px;line-height:12.5px;color:#000;transform:scaleX(1.0376);">Cell (7,5)</div>
<div class="t" style="left:188.85px;top:427.62px;font-size:12.5px;line-height:12.5px;color:#000;transform:scaleX(1.0376);">Cell (8,1)</div>
<div class="t" style="left:309.55px;top:427.62px;font-size:12.5px;line-height:12.5px;color:#000;transform:scaleX(1.0376);">Cell (8,2)</div>
<div class="t" style="left:430.25px;top:427.62px;font-size:12.5px;line-height:12.5px;color:#000;transform:scaleX(1.0376);">Cell (8,3)</div>
<div class="t" style="left:550.95px;top:427.62px;font-size:12.5px;line-height:12.5px;color:#000;transform:scaleX(1.0376);">Cell (8,4)</div>
<div class="t" style="left:671.65px;top:427.62px;font-size:12.5px;line-height:12.5px;color:#000;transform:scaleX(1.0376);">Cell (8,5)</div>
<div class="t" style="left:188.85px;top:446.62px;font-size:12.5px;line-height:12.5px;color:#000;transform:scaleX(1.0376);">Cell (9,1)</div>
<div class="t" style="left:309.55px;top:446.62px;font-size:12.5px;line-height:12.5px;color:#000;transform:scaleX(1.0376);">Cell (9,2)</div>
<div class="t" style="left:430.25px;top:446.62px;font-size:12.5px;line-height:12.5px;color:#000;transform:scaleX(1.0376);">Cell (9,3)</div>
<div class="t" style="left:550.95px;top:446.62px;font-size:12.5px;line-height:12.5px;color:#000;transform:scaleX(1.0376);">Cell (9,4)</div>
<div class="t" style="left:671.65px;top:446.62px;font-size:12.5px;line-height:12.5px;color:#000;transform:scaleX(1.0376);">Cell (9,5)</div>
<div class="t" style="left:188.85px;top:464.62px;font-size:12.5px;line-height:12.5px;color:#000;transform:scaleX(1.0376);">Cell (10,1)</div>
<div class="t" style="left:309.55px;top:464.62px;font-size:12.5px;line-height:12.5px;color:#000;transform:scaleX(1.0376);">Cell (10,2)</div>
<div class="t" style="left:430.25px;top:464.62px;font-size:12.5px;line-height:12.5px;color:#000;transform:scaleX(1.0376);">Cell (10,3)</div>
<div class="t" style="left:550.95px;top:464.62px;font-size:12.5px;line-height:12.5px;color:#000;transform:scaleX(1.0376);">Cell (10,4)</div>
<div class="t" style="left:671.65px;top:464.62px;font-size:12.5px;line-height:12.5px;color:#000;transform:scaleX(1.0376);">Cell (10,5)</div>
</body></html>
